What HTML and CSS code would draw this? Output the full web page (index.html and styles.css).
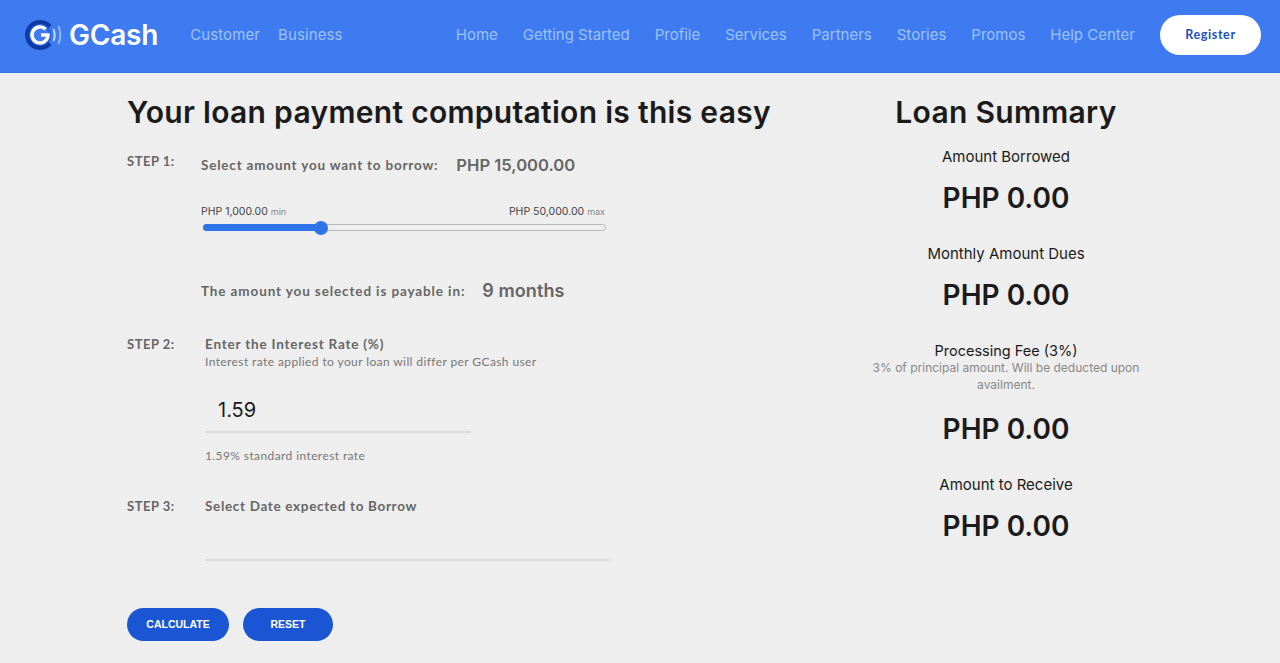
FILE: index.html

```html
<!doctype html>
<html lang="en">

<head>
	<meta charset="utf-8">
	<title>Loan Calculator - GCash</title>
	<link rel="stylesheet" href="styles.css">
</head>

<body>
	<header class="topbar">
		<a class="logo" href="#">
			<svg class="logoMark" width="38" height="32" viewBox="0 0 38 32">
				<circle cx="16" cy="16" r="10" fill="none" stroke="#2a66dc" stroke-width="3" />
				<path d="M26 7.6A13 13 0 1 0 26 24.4" fill="none" stroke="#0f3aa6" stroke-width="4" />
				<path d="M21.7 10.3A8 8 0 1 0 24 16H17" fill="none" stroke="#ffffff" stroke-width="3.4" />
				<path d="M29.5 10q2.4 6 0 12" stroke="#c3d8fb" stroke-width="2" fill="none" />
				<path d="M34.5 7q3.6 9 0 18" stroke="#93b8f8" stroke-width="2" fill="none" />
			</svg>
			<span class="logoText">GCash</span>
		</a>
		<nav class="navLeft">
			<a href="#">Customer</a>
			<a href="#">Business</a>
		</nav>
		<nav class="navRight">
			<a href="#">Home</a>
			<a href="#">Getting Started</a>
			<a href="#">Profile</a>
			<a href="#">Services</a>
			<a href="#">Partners</a>
			<a href="#">Stories</a>
			<a href="#">Promos</a>
			<a href="#">Help Center</a>
		</nav>
		<a class="register" href="#">Register</a>
	</header>

	<main class="page">
		<section class="calc">
			<h1>Your loan payment computation is this easy</h1>

			<div class="step stepOne">
				<div class="stepName">STEP 1:</div>
				<div class="stepBody">
					<div class="amountRow">
						<span class="label">Select amount you want to borrow:</span>
						<span class="bigValue">PHP 15,000.00</span>
					</div>
					<div class="rangeLabels">
						<span>PHP 1,000.00 <small>min</small></span>
						<span>PHP 50,000.00 <small>max</small></span>
					</div>
					<div class="slider">
						<div class="sliderFill"></div>
						<div class="sliderThumb"></div>
					</div>
					<div class="payableRow">
						<span class="label">The amount you selected is payable in:</span>
						<span class="bigValue monthsValue">9 months</span>
					</div>
				</div>
			</div>

			<div class="step stepTwo">
				<div class="stepName">STEP 2:</div>
				<div class="stepBody">
					<div class="label">Enter the Interest Rate (%)</div>
					<div class="hint">Interest rate applied to your loan will differ per GCash user</div>
					<div class="rateInput">1.59</div>
					<div class="hint rateHint">1.59% standard interest rate</div>
				</div>
			</div>

			<div class="step stepThree">
				<div class="stepName">STEP 3:</div>
				<div class="stepBody">
					<div class="label dateLabel">Select Date expected to Borrow</div>
					<div class="dateInput"></div>
				</div>
			</div>

			<div class="actions">
				<button class="btn btnCalc">CALCULATE</button>
				<button class="btn btnReset">RESET</button>
			</div>
		</section>

		<aside class="summary">
			<h2>Loan Summary</h2>
			<div class="sumItem">
				<div class="sumName">Amount Borrowed</div>
				<div class="sumValue">PHP 0.00</div>
			</div>
			<div class="sumItem">
				<div class="sumName">Monthly Amount Dues</div>
				<div class="sumValue">PHP 0.00</div>
			</div>
			<div class="sumItem">
				<div class="sumName feeName">Processing Fee (3%)</div>
				<div class="sumNote">3% of principal amount. Will be deducted upon availment.</div>
				<div class="sumValue">PHP 0.00</div>
			</div>
			<div class="sumItem">
				<div class="sumName">Amount to Receive</div>
				<div class="sumValue">PHP 0.00</div>
			</div>
		</aside>
	</main>
</body>

</html>
```

FILE: styles.css

```css
html,
body {
	margin: 0;
	padding: 0;
	height: 663px;
	overflow: hidden;
	background: #eeeeee;
	font-family: Inter, "Open Sans", sans-serif;
}
a {
	text-decoration: none;
	color: inherit;
}
.topbar {
	display: flex;
	align-items: center;
	box-sizing: border-box;
	height: 73px;
	padding: 0 19px 3px 24px;
	background: #3e7bf1;
	border-bottom: 1px solid #2f78ee;
}
.logo {
	display: flex;
	align-items: center;
	gap: 7px;
}
.logoText {
	color: #fff;
	font-size: 28px;
	font-weight: 600;
	letter-spacing: -0.2px;
}
.navLeft,
.navRight {
	display: flex;
	color: #9cc2fb;
	font-size: 15px;
	white-space: nowrap;
}
.navLeft {
	gap: 18px;
	margin-left: 32px;
	letter-spacing: 0.1px;
}
.navRight {
	gap: 25px;
	margin-left: auto;
}
.register {
	display: flex;
	align-items: center;
	justify-content: center;
	box-sizing: border-box;
	width: 101px;
	height: 40px;
	margin-left: 25px;
	border-radius: 20px;
	background: #fff;
	color: #1c4fc4;
	font-family: Lato, sans-serif;
	font-size: 12.5px;
	font-weight: 700;
	letter-spacing: 0.6px;
}
.page {
	display: flex;
	padding-left: 127px;
}
.calc {
	width: 680px;
}
h1 {
	margin: 21px 0 0;
	color: #1b1b1b;
	font-size: 30px;
	line-height: 36px;
	font-weight: 600;
	letter-spacing: 0.3px;
	white-space: nowrap;
}
.step {
	display: flex;
	color: #666;
}
.stepName {
	color: #666;
	font-family: Lato, sans-serif;
	font-size: 13px;
	font-weight: 700;
	letter-spacing: 0.5px;
}
.stepOne {
	margin-top: 23px;
}
.stepOne .stepName {
	width: 74px;
}
.stepTwo .stepName,
.stepThree .stepName {
	width: 78px;
}
.label {
	font-family: Lato, sans-serif;
	font-size: 13.5px;
	font-weight: 700;
	letter-spacing: 0.8px;
	color: #666;
}
.payableRow .label {
	letter-spacing: 0.88px;
}
.dateLabel {
	letter-spacing: 0.67px;
}
.bigValue {
	font-size: 16.6px;
	font-weight: 600;
	color: #666;
}
.monthsValue {
	font-size: 18px;
	letter-spacing: 0.1px;
}
.amountRow {
	display: flex;
	align-items: center;
	gap: 18px;
	padding-top: 2px;
}
.rangeLabels {
	display: flex;
	justify-content: space-between;
	width: 404px;
	margin-top: 30px;
	color: #444;
	font-size: 10.5px;
}
.rangeLabels small {
	color: #888;
	font-size: 9px;
}
.slider {
	position: relative;
	box-sizing: border-box;
	width: 403px;
	height: 7px;
	margin: 6px 0 0 2px;
	border: 1px solid #b9b9b9;
	border-radius: 4px;
}
.sliderFill {
	position: absolute;
	left: -1px;
	top: -1px;
	width: 118px;
	height: 7px;
	border-radius: 4px;
	background: #2f74e8;
}
.sliderThumb {
	position: absolute;
	left: 110px;
	top: -4px;
	width: 14px;
	height: 14px;
	border-radius: 50%;
	background: #2f74e8;
}
.payableRow {
	display: flex;
	align-items: center;
	gap: 17px;
	margin-top: 49px;
}
.stepTwo {
	margin-top: 35px;
}
.hint {
	margin-top: 2px;
	color: #777;
	font-family: Lato, sans-serif;
	font-size: 12px;
	letter-spacing: 0.4px;
}
.rateInput {
	box-sizing: border-box;
	width: 266px;
	height: 55px;
	margin-top: 9px;
	padding: 20px 0 0 13px;
	border-bottom: 2px solid #dadada;
	color: #1b1b1b;
	font-size: 20px;
}
.rateHint {
	margin-top: 15px;
}
.stepThree {
	margin-top: 35px;
}
.dateInput {
	width: 404px;
	height: 45px;
	border-bottom: 2px solid #dadada;
}
.actions {
	display: flex;
	gap: 14px;
	margin-top: 47px;
}
.btn {
	height: 33px;
	padding: 0 0 2px;
	border: 0;
	border-radius: 17px;
	background: #1a56d3;
	color: #fff;
	font-family: "Liberation Sans", sans-serif;
	font-size: 10.5px;
	font-weight: 700;
}
.btnCalc {
	width: 102px;
}
.btnReset {
	width: 90px;
}
.summary {
	width: 300px;
	margin-left: 49px;
	text-align: center;
}
h2 {
	margin: 21px 0 0;
	color: #1b1b1b;
	font-size: 30px;
	line-height: 36px;
	font-weight: 600;
	letter-spacing: 0.3px;
}
.sumItem {
	margin-bottom: 28px;
}
.sumItem:first-of-type {
	margin-top: 17px;
}
.sumName {
	color: #1b1b1b;
	font-size: 15px;
	line-height: 20px;
}
.feeName {
	font-size: 14.5px;
}
.sumNote {
	width: 280px;
	margin: -2px auto 0;
	padding-bottom: 5px;
	color: #888;
	font-size: 12px;
	line-height: 17px;
}
.sumValue {
	margin-top: 13px;
	color: #1b1b1b;
	font-size: 28px;
	line-height: 36px;
	font-weight: 600;
}
```
